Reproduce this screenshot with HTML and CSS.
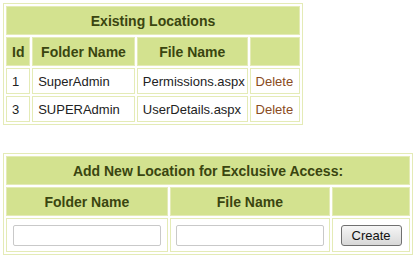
FILE: index.html
```html
<!DOCTYPE html>
<html lang="en">
<head>
  <meta charset="UTF-8">
  <title>Exclusive Access</title>
  <link rel="stylesheet" href="styles.css">
</head>
<body>
  <table class="grid locations">
    <colgroup>
      <col class="col-id">
      <col class="col-folder">
      <col class="col-file">
      <col class="col-action">
    </colgroup>
    <tr>
      <th colspan="4" class="title">Existing Locations</th>
    </tr>
    <tr>
      <th>Id</th>
      <th>Folder Name</th>
      <th>File Name</th>
      <th></th>
    </tr>
    <tr>
      <td>1</td>
      <td>SuperAdmin</td>
      <td>Permissions.aspx</td>
      <td><a href="#" class="delete">Delete</a></td>
    </tr>
    <tr>
      <td>3</td>
      <td>SUPERAdmin</td>
      <td>UserDetails.aspx</td>
      <td><a href="#" class="delete">Delete</a></td>
    </tr>
  </table>

  <table class="grid add-form">
    <colgroup>
      <col class="col-new-folder">
      <col class="col-new-file">
      <col class="col-new-action">
    </colgroup>
    <tr>
      <th colspan="3" class="title">Add New Location for Exclusive Access:</th>
    </tr>
    <tr>
      <th>Folder Name</th>
      <th>File Name</th>
      <th></th>
    </tr>
    <tr>
      <td class="field"><input type="text"></td>
      <td class="field"><input type="text"></td>
      <td class="field"><button type="button">Create</button></td>
    </tr>
  </table>
</body>
</html>
```

FILE: styles.css
```css
body {
  margin: 3px;
  font-family: "Liberation Sans", Arial, sans-serif;
  font-size: 13px;
  color: #222;
  background: #fff;
}
.grid {
  border: 1px solid #e4ebb6;
  border-collapse: separate;
  border-spacing: 2px;
  table-layout: fixed;
}
.grid th,
.grid td {
  border: 1px solid #e4ebb6;
  padding: 0 5px;
  white-space: nowrap;
}
.grid th {
  background-color: #d3e28f;
  color: #3a4510;
  font-weight: bold;
  font-size: 14px;
  height: 27px;
}
.grid td {
  height: 24px;
}
.locations {
  width: 300px;
}
.col-id { width: 24px; }
.col-folder { width: 102px; }
.col-file { width: 110px; }
.col-action { width: 50px; }
.delete {
  color: #8a4b22;
  text-decoration: none;
}
.add-form {
  margin-top: 28px;
  width: 410px;
}
.col-new-folder { width: 160px; }
.col-new-file { width: 159px; }
.col-new-action { width: 77px; }
.grid .field {
  height: 32px;
  text-align: center;
}
input {
  width: 148px;
  height: 21px;
  border: 1px solid #c9c9c9;
  border-radius: 2px;
  padding: 0 2px;
  box-sizing: border-box;
  vertical-align: middle;
}
button {
  font-family: "Liberation Sans", Arial, sans-serif;
  font-size: 13px;
  color: #111;
  width: 61px;
  height: 21px;
  padding: 0;
  border: 1px solid #707070;
  border-radius: 3px;
  background: linear-gradient(#f6f6f6, #d8d8d8);
  vertical-align: middle;
}
```
